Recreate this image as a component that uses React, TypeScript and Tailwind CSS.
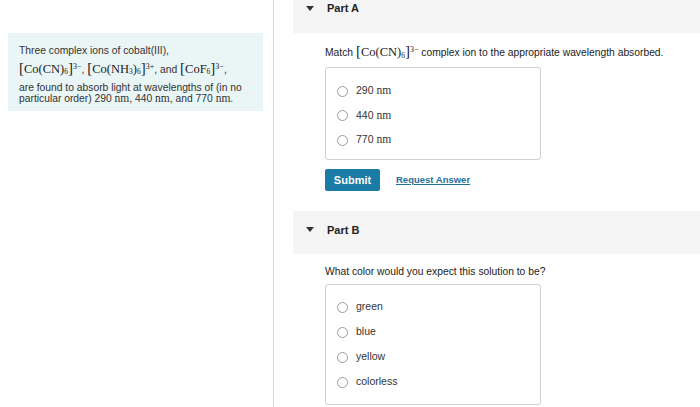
const sans = { fontFamily: '"Liberation Sans", Arial, sans-serif' };

function Ion({ body, sub, sup }: { body: React.ReactNode; sub?: string; sup: string }) {
  return (
    <span className="font-['Liberation_Serif',serif] text-[12.5px] text-[#222]">
      <span className="text-[15px] leading-none">[</span>
      {body}
      {sub && <sub className="text-[7.5px]">{sub}</sub>}
      <span className="text-[15px] leading-none">]</span>
      <sup className="relative -top-[4px] text-[8px]">{sup}</sup>
    </span>
  );
}

function Nm({ v }: { v: string }) {
  return (
    <span>
      {v} <span className="font-['Liberation_Serif',serif] text-[11.5px]">nm</span>
    </span>
  );
}

function Radio({ children, h }: { children: React.ReactNode; h: string }) {
  return (
    <label className={"flex items-center gap-[8px] " + h}>
      <span className="h-[11px] w-[11px] rounded-full border border-[#9a9a9a] bg-white" />
      <span className="text-[10.5px] text-[#333]">{children}</span>
    </label>
  );
}

function PartHeader({ title, className }: { title: string; className?: string }) {
  return (
    <div className={"flex items-center bg-[#f5f5f5] pl-[13px] " + (className ?? "")}>
      <svg width="8" height="6" viewBox="0 0 8 6" className="mr-[13px]">
        <path d="M0 0 L8 0 L4 5 Z" fill="#333" />
      </svg>
      <span className="text-[11px] font-bold text-[#222]">{title}</span>
    </div>
  );
}

export default function App() {
  return (
    <div className="flex h-[407px] w-[700px] overflow-hidden bg-white" style={sans}>
      <div className="w-[273px] shrink-0 pt-[33px] pl-[8px] pr-[10px]">
        <div className="bg-[#eaf5f6] px-[11px] pt-[12px] pb-[6px] text-[10.3px] leading-[11.5px] text-[#333]">
          <p>Three complex ions of cobalt(III),</p>
          <p className="mt-[4px] mb-[4px] leading-[17px]">
            <Ion body="Co(CN)" sub="6" sup="3−" />,&nbsp;
            <Ion body={<>Co(NH<sub className="text-[7.5px]">3</sub>)</>} sub="6" sup="3+" />, and{" "}
            <Ion body={<>CoF<sub className="text-[7.5px]">6</sub></>} sup="3−" />,
          </p>
          <p>are found to absorb light at wavelengths of (in no</p>
          <p>
            particular order) <Nm v="290" />, <Nm v="440" />, and <Nm v="770" />.
          </p>
        </div>
      </div>

      <div className="w-[1px] shrink-0 bg-[#d8d8d8]" />

      <div className="flex-1 pl-[19px]">
        <PartHeader title="Part A" className="h-[33px] pb-[16px]" />
        <div className="pl-[32px]">
          <p className="mt-[10px] flex items-center text-[10.3px] text-[#222]">
            Match&nbsp;<Ion body="Co(CN)" sub="6" sup="3−" />&nbsp;complex ion to the appropriate wavelength absorbed.
          </p>
          <div className="mt-[5px] w-[216px] rounded-[3px] border border-[#cfcfcf] px-[11px] pt-[11px] pb-[7px]">
            <Radio h="h-[24.5px]"><Nm v="290" /></Radio>
            <Radio h="h-[24.5px]"><Nm v="440" /></Radio>
            <Radio h="h-[24.5px]"><Nm v="770" /></Radio>
          </div>
          <div className="mt-[9px] flex items-center">
            <button className="h-[22px] w-[55px] rounded-[2px] bg-[#1a7ba6] text-[11px] font-bold text-white">
              Submit
            </button>
            <a className="ml-[16px] text-[9.5px] font-bold text-[#1f6f99] underline">Request Answer</a>
          </div>
        </div>

        <PartHeader title="Part B" className="mt-[20px] h-[43px] pb-[6px]" />
        <div className="pl-[32px]">
          <p className="mt-[10px] text-[10.3px] text-[#222]">What color would you expect this solution to be?</p>
          <div className="mt-[4px] w-[216px] rounded-[3px] border border-[#cfcfcf] px-[11px] pt-[10px] pb-[9px]">
            <Radio h="h-[25px]">green</Radio>
            <Radio h="h-[25px]">blue</Radio>
            <Radio h="h-[25px]">yellow</Radio>
            <Radio h="h-[25px]">colorless</Radio>
          </div>
        </div>
      </div>
    </div>
  );
}
